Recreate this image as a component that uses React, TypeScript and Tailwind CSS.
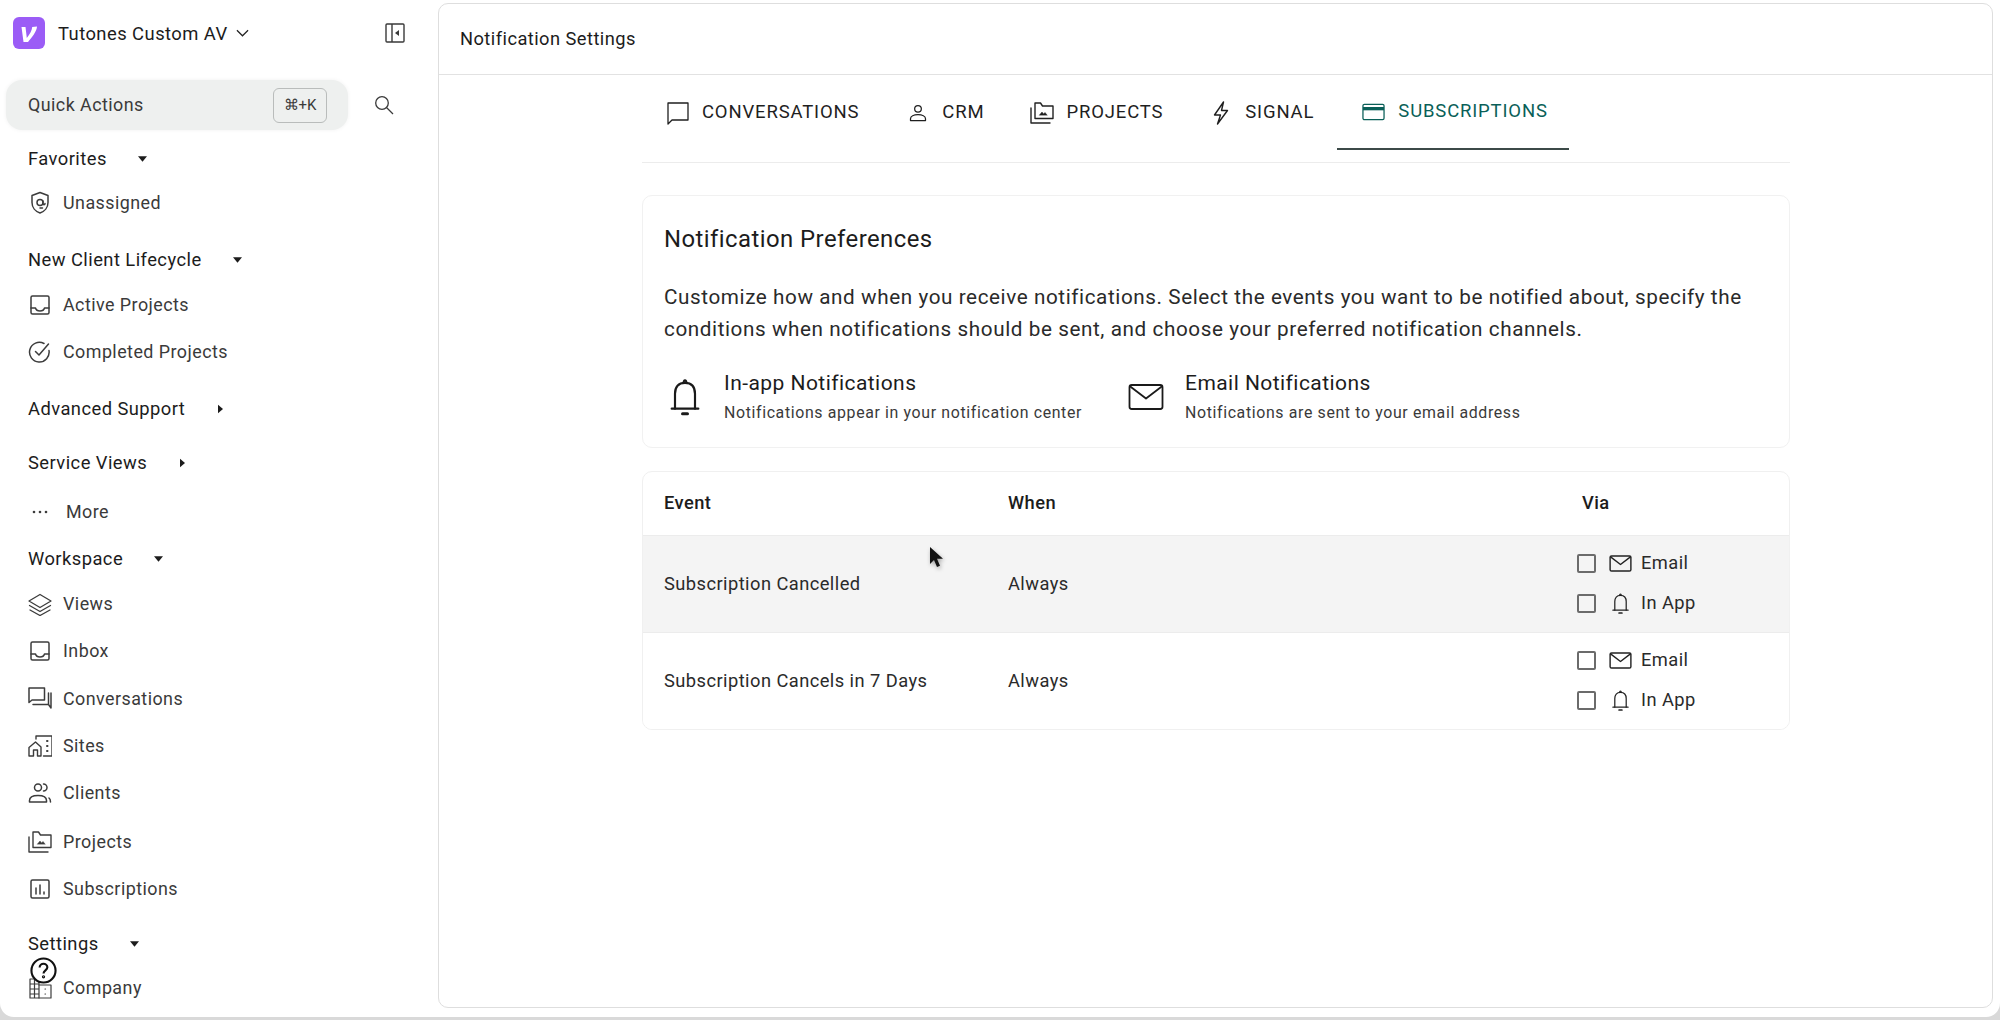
import React from "react";

type P = { className?: string };
const Svg = ({ className, children, vb = "0 0 24 24", sw = 1.5 }: P & { children: React.ReactNode; vb?: string; sw?: number }) => (
  <svg viewBox={vb} fill="none" stroke="currentColor" strokeWidth={sw} strokeLinecap="round" strokeLinejoin="round" className={className}>
    {children}
  </svg>
);

const Shield = () => (
  <Svg className="w-6 h-6 text-[#3c3c3c]">
    <path d="M12 1.500 L20 4.500 V11.500 C20 16.500 16.500 20.500 12 22 C7.500 20.500 4 16.500 4 11.500 V4.500 Z" />
    <circle cx="12" cy="11.500" r="3" />
    <path d="M15 10v2.500c0 1.500 2 1.500 2 0M12 17h2.500" />
  </Svg>
);
const Inbox = () => (
  <Svg className="w-6 h-6 text-[#3c3c3c]">
    <rect x="3" y="3" width="18" height="18" rx="1.500" />
    <path d="M3 15h4.500c.5 2 2 3 4.500 3s4-1 4.500-3H21" />
  </Svg>
);
const Check = () => (
  <Svg className="w-6 h-6 text-[#3c3c3c]">
    <path d="M21 10.500A9.800 9.800 0 1 1 16 3.500" />
    <path d="M7.500 11.500l3.500 3.500L20.500 4" />
  </Svg>
);
const Layers = () => (
  <Svg className="w-6 h-6 text-[#3c3c3c]" sw={1.3}>
    <path d="M12 2.500 23 9l-11 6.500L1 9z" />
    <path d="M1.500 13.500 12 19.500l10.500-6" />
    <path d="M2 18 12 23.500 22 18" />
  </Svg>
);
const Chats = () => (
  <Svg className="w-6 h-6 text-[#3c3c3c]" sw={1.5}>
    <path d="M1 1h15.500v12H4L1 15.500z" />
    <path d="M5 17.500h15.500V6M20.500 17.500 23 21V6" />
  </Svg>
);
const Sites = () => (
  <Svg className="w-6 h-6 text-[#3c3c3c]" sw={1.4}>
    <path d="M1 22V13.500L7.500 8 13 13v9H9.500v-6h-4v6z" />
    <path d="M8 5V2h16v20H15.500" />
    <path d="M19 7h.5M19 12h.5M19 17h.5" strokeWidth={2} />
  </Svg>
);
const Clients = () => (
  <Svg className="w-6 h-6 text-[#3c3c3c]" sw={1.5}>
    <circle cx="10" cy="6.500" r="3.500" />
    <path d="M15.500 3a3.500 3.500 0 0 1 0 7" />
    <path d="M1.500 21v-1.500C1.500 16 5 14.500 10 14.500s8.500 1.500 8.500 5V21z" />
    <path d="M21 17c1 .8 1.500 2 1.500 4" />
  </Svg>
);
const Folders = ({ className = "w-6 h-6 text-[#3c3c3c]" }: P) => (
  <Svg className={className} sw={1.4}>
    <path d="M5 2h5.500l2 3H23v12.500H5z" />
    <path d="M1 7v15h19" />
    <path d="M9.500 14l2.500-3 1.500 2 1.500-1.500 2 2.500z" fill="currentColor" strokeWidth={0.5} />
  </Svg>
);
const Chart = () => (
  <Svg className="w-6 h-6 text-[#3c3c3c]">
    <rect x="3" y="3" width="18" height="18" rx="1.500" />
    <path d="M8 11v6M12 8v9M16 15v2" />
  </Svg>
);
const Building = () => (
  <Svg className="w-6 h-6 text-[#3c3c3c]" sw={1.2}>
    <path d="M2 22V3h9v19zM2 8h9M2 13h9M2 18h9M6.500 3v19" />
    <path d="M11 9h12v13H11M17 13h.5M17 18h.5" />
  </Svg>
);
const Dots = () => (
  <svg viewBox="0 0 24 24" className="w-6 h-6 text-[#3c3c3c]" fill="currentColor">
    <circle cx="6" cy="12" r="1.300" />
    <circle cx="12" cy="12" r="1.300" />
    <circle cx="18" cy="12" r="1.300" />
  </svg>
);
const CaretDown = () => (
  <svg viewBox="0 0 10 6" className="w-[9px] h-[6px]" fill="#1c1c1c"><path d="M0 0h10L5 6z" /></svg>
);
const CaretRight = () => (
  <svg viewBox="0 0 6 10" className="w-[5px] h-[10px]" fill="#1c1c1c"><path d="M0 0v10l6-5z" /></svg>
);
const Mail = ({ className, sw = 1.2 }: P & { sw?: number }) => (
  <Svg className={className} vb="0 0 24 18" sw={sw}>
    <rect x="1" y="1" width="22" height="16" rx="1.500" />
    <path d="M1.500 2 12 10 22.500 2" />
  </Svg>
);
const Bell = ({ className }: P) => (
  <Svg className={className} vb="0 0 20 24" sw={1.300}>
    <path d="M2 19h16" />
    <path d="M4 19V10c0-4 2-6.500 6-6.500s6 2.500 6 6.500v9" />
    <path d="M9.200 3.500c0-1 .3-1.500.8-1.500s.8.5.8 1.500" />
    <path d="M8.500 22h3" strokeWidth={1.800} />
  </Svg>
);
const CheckBox = () => <span className="block w-[19px] h-[19px] rounded-[2px] border-[2.5px] border-[#6b6b6b] shrink-0" />;

type Row = { kind: "head" | "item"; label: string; mt: string; icon?: React.ReactNode; caret?: "down" | "right"; textX?: string };

const rows: Row[] = [
  { kind: "head", label: "Favorites", mt: "mt-[9px]", caret: "down" },
  { kind: "item", label: "Unassigned", mt: "mt-[4px]", icon: <Shield /> },
  { kind: "head", label: "New Client Lifecycle", mt: "mt-[17px]", caret: "down" },
  { kind: "item", label: "Active Projects", mt: "mt-[5px]", icon: <Inbox /> },
  { kind: "item", label: "Completed Projects", mt: "mt-[7px]", icon: <Check /> },
  { kind: "head", label: "Advanced Support", mt: "mt-[17px]", caret: "right" },
  { kind: "head", label: "Service Views", mt: "mt-[14px]", caret: "right" },
  { kind: "item", label: "More", mt: "mt-[9px]", icon: <Dots />, textX: "ml-[14px]" },
  { kind: "head", label: "Workspace", mt: "mt-[7px]", caret: "down" },
  { kind: "item", label: "Views", mt: "mt-[5px]", icon: <Layers /> },
  { kind: "item", label: "Inbox", mt: "mt-[7px]", icon: <Inbox /> },
  { kind: "item", label: "Conversations", mt: "mt-[8px]", icon: <Chats /> },
  { kind: "item", label: "Sites", mt: "mt-[7px]", icon: <Sites /> },
  { kind: "item", label: "Clients", mt: "mt-[7px]", icon: <Clients /> },
  { kind: "item", label: "Projects", mt: "mt-[9px]", icon: <Folders /> },
  { kind: "item", label: "Subscriptions", mt: "mt-[7px]", icon: <Chart /> },
  { kind: "head", label: "Settings", mt: "mt-[15px]", caret: "down" },
  { kind: "item", label: "Company", mt: "mt-[4px]", icon: <Building /> },
];

const tabs = [
  { label: "CONVERSATIONS", pad: "pl-[23px] pr-[24px]", icon: <Svg className="w-6 h-6" sw={1.3}><path d="M2 2h20v17H6l-4 4z" /></Svg> },
  { label: "CRM", pad: "px-[23px]", icon: <Svg className="w-5 h-5 mx-[2px]" sw={1.5}><circle cx="12" cy="7" r="4" /><path d="M3 21v-2c0-3 4-5 9-5s9 2 9 5v2z" /></Svg> },
  { label: "PROJECTS", pad: "px-[23px]", icon: <Folders className="w-6 h-6 text-[#222]" /> },
  { label: "SIGNAL", pad: "px-[23px]", icon: <Svg className="w-6 h-6" sw={1.4}><path d="M14.500 1 5.500 14h6L8.500 23 18.500 9.500h-6z" /></Svg> },
];

const Via = ({ icon, label }: { icon: React.ReactNode; label: string }) => (
  <div className="flex items-center h-[40px]">
    <CheckBox />
    <span className="w-[24px] ml-[12px] flex justify-center">{icon}</span>
    <span className="ml-[9px] text-[#2a2a2a]">{label}</span>
  </div>
);

const TableRow = ({ title, bg }: { title: string; bg: string }) => (
  <div className={`flex items-center ${bg}`}>
    <div className="w-[365px] pl-[21px] shrink-0 text-[#2a2a2a]">{title}</div>
    <div className="w-[569px] shrink-0 text-[#2a2a2a]">Always</div>
    <div className="flex flex-col mb-[2px]">
      <Via icon={<Mail className="w-[23px] h-[17px] text-[#222]" sw={1.5} />} label="Email" />
      <Via icon={<Bell className="w-[19px] h-[23px] text-[#222]" />} label="In App" />
    </div>
  </div>
);

export default function App() {
  return (
    <div className="relative w-[2000px] h-[1020px] bg-[#d9d9d9] overflow-hidden font-['Roboto',sans-serif] text-[17.9px] tracking-[0.025em] text-[#1c1c1c]">
      <div className="flex h-[1017px] bg-white rounded-bl-[14px] rounded-br-[14px]">
        <aside className="w-[438px] shrink-0 flex flex-col">
          <div className="flex items-center h-[66px] pl-[13px] pr-[33px]">
            <svg viewBox="0 0 32 32" className="w-8 h-8 shrink-0">
              <rect width="32" height="32" rx="6" fill="#9b5cf6" />
              <path d="M8.500 10H12.500L13.800 21C17 17 19 13 19.200 10L24 9.500C24 14 18.500 21 15 25H10.500Z" fill="white" />
            </svg>
            <span className="ml-[13px] pt-[1px] text-[#1c1c1c] text-[18.400px]">Tutones Custom AV</span>
            <svg viewBox="0 0 14 8" className="w-[13px] h-[8px] ml-[8px]" fill="none" stroke="#222" strokeWidth="1.300"><path d="M1 1l6 6 6-6" /></svg>
            <svg viewBox="0 0 20 20" className="w-[20px] h-[20px] ml-auto" fill="none" stroke="#3a3a3a" strokeWidth="1.400">
              <rect x="1" y="1" width="18" height="18" rx="1" />
              <path d="M7 1v18" />
              <path d="M14 7v6l-4-3z" fill="#3a3a3a" stroke="none" />
            </svg>
          </div>
          <div className="flex items-center mt-[14px] pl-[6px]">
            <div className="w-[342px] h-[50px] rounded-[16px] bg-[#eef0ef] flex items-center pl-[22px] pr-[21px] justify-between shadow-[0_0_4px_rgba(0,0,0,0.06)]">
              <span className="text-[#3a3a3a]">Quick Actions</span>
              <span className="w-[54px] h-[35px] rounded-[6px] border border-[#b9bcbb] flex items-center justify-center text-[15px] text-[#3a3a3a] tracking-normal">⌘+K</span>
            </div>
            <svg viewBox="0 0 20 20" className="w-[20px] h-[20px] ml-[26px]" fill="none" stroke="#3a3a3a" strokeWidth="1.300">
              <circle cx="8" cy="8" r="6.300" />
              <path d="M12.500 12.500 19 19" />
            </svg>
          </div>
          {rows.map((r) =>
            r.kind === "head" ? (
              <div key={r.label} className={`flex items-center h-10 pl-[28px] ${r.mt}`}>
                <span className="text-[18.350px] text-[#1c1c1c]">{r.label}</span>
                <span className={r.caret === "down" ? "ml-[31px]" : "ml-[33px]"}>{r.caret === "down" ? <CaretDown /> : <CaretRight />}</span>
              </div>
            ) : (
              <div key={r.label} className={`flex items-center h-10 pl-[28px] ${r.mt}`}>
                <span className="w-6 h-6 shrink-0">{r.icon}</span>
                <span className={`text-[#3a3a3a] ${r.textX ?? "ml-[11px]"}`}>{r.label}</span>
              </div>
            )
          )}
        </aside>

        <main className="mt-[3px] mb-[9px] w-[1555px] border border-[#dedede] rounded-[10px] flex flex-col min-w-0">
          <div className="h-[71px] flex items-center pl-[21px] border-b border-[#e2e2e2] text-[#1c1c1c] text-[18.300px]">Notification Settings</div>
          <div className="w-[1148px] ml-[203px]">
            <div className="h-[88px] pl-[1px] border-b border-[#ececec] flex items-start">
              {tabs.map((t) => (
                <div key={t.label} className={`h-[75px] flex items-center gap-[12px] text-[18.500px] tracking-[0.045em] text-[#1f1f1f] ${t.pad}`}>
                  {t.icon}
                  <span>{t.label}</span>
                </div>
              ))}
              <div className="h-[75px] w-[232px] px-[25px] pt-[1px] flex items-center gap-[13px] text-[18.500px] tracking-[0.045em] text-[#0a5f58] border-b-2 border-[#3c4a48]">
                <svg viewBox="0 0 24 18" className="w-[23px] h-[18px] shrink-0" fill="none" stroke="#0a5f58" strokeWidth="1.300">
                  <rect x="1" y="1" width="22" height="16" rx="1.500" />
                  <path d="M1 5.500h22" strokeWidth="3.500" />
                </svg>
                <span>SUBSCRIPTIONS</span>
              </div>
            </div>

            <div className="mt-[32px] h-[253px] rounded-[10px] border border-[#f1f1f1] px-[21px] pt-[26px]">
              <div className="text-[23.900px] leading-[34px] text-[#1c1c1c]">Notification Preferences</div>
              <p className="mt-[25px] text-[20.700px] leading-[32px] text-[#2a2a2a] tracking-[0.028em] whitespace-nowrap">
                Customize how and when you receive notifications. Select the events you want to be notified about, specify the
                <br />
                conditions when notifications should be sent, and choose your preferred notification channels.
              </p>
              <div className="flex mt-[22px] pl-[4px]">
                <div className="flex items-center w-[460px]">
                  <Bell className="w-[34px] h-[40px] text-[#1a1a1a]" />
                  <div className="ml-[22px]">
                    <div className="text-[21px] leading-[32px] text-[#1c1c1c]">In-app Notifications</div>
                    <div className="text-[15.900px] leading-[27px] tracking-[0.04em] text-[#3a3a3a]">Notifications appear in your notification center</div>
                  </div>
                </div>
                <div className="flex items-center">
                  <Mail className="w-[36px] h-[28px] text-[#1a1a1a]" />
                  <div className="ml-[21px]">
                    <div className="text-[21px] leading-[32px] text-[#1c1c1c]">Email Notifications</div>
                    <div className="text-[15.900px] leading-[27px] tracking-[0.04em] text-[#3a3a3a]">Notifications are sent to your email address</div>
                  </div>
                </div>
              </div>
            </div>

            <div className="mt-[23px] rounded-[10px] border border-[#f0f0f0] overflow-hidden text-[18.300px]">
              <div className="flex items-center h-[64px] pb-[2px] border-b border-[#ececec] text-[#1c1c1c] font-medium">
                <div className="w-[365px] pl-[21px] shrink-0">Event</div>
                <div className="w-[574px] shrink-0">When</div>
                <div>Via</div>
              </div>
              <TableRow title="Subscription Cancelled" bg="h-[97px] bg-[#f4f4f4] border-b border-[#ececec]" />
              <TableRow title="Subscription Cancels in 7 Days" bg="h-[96px] bg-white" />
            </div>
          </div>
        </main>
      </div>

      <svg viewBox="0 0 28 28" className="absolute left-[30px] top-[957px] w-[27px] h-[27px]" fill="white" stroke="#111" strokeWidth="2.200">
        <circle cx="14" cy="14" r="12.500" />
        <path d="M10 11c0-2.500 2-4 4-4s4 1.500 4 3.700c0 3-4 3.300-4 6.300" fill="none" />
        <circle cx="14" cy="20.500" r="0.600" />
      </svg>
      <svg viewBox="0 0 16 24" className="absolute left-[929px] top-[546px] w-[16px] h-[24px] drop-shadow-[1px_2px_2px_rgba(0,0,0,0.35)]" fill="#111">
        <path d="M1 1v17l4-4 3 7 3-1.300-3-7h6z" />
      </svg>
    </div>
  );
}
